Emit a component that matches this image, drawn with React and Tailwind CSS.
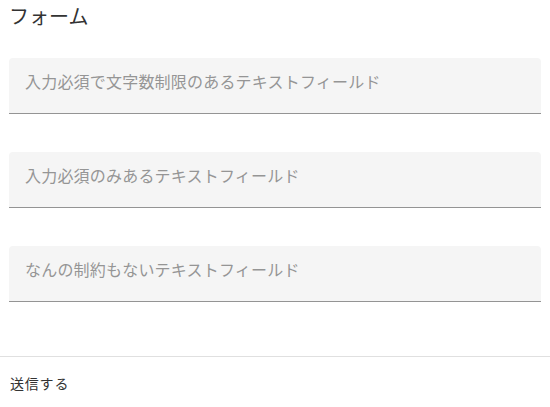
export default function App() {
  const fields = [
    '入力必須で文字数制限のあるテキストフィールド',
    '入力必須のみあるテキストフィールド',
    'なんの制約もないテキストフィールド',
  ];

  return (
    <div
      className="w-[550px] h-[407px] bg-white text-[#212121]"
      style={{ fontFamily: '"Noto Sans CJK JP", "Noto Sans", sans-serif' }}
    >
      {/* Header + fields */}
      <div className="px-[9px]">
        <h1 className="text-[20px] leading-[32px] font-normal text-[#333]">フォーム</h1>
        <div className="mt-[26px] flex flex-col gap-[38px]">
          {fields.map((label) => (
            <div
              key={label}
              className="h-[56px] bg-[#f5f5f5] rounded-t-[4px] border-b border-[#949494] px-[16px] pt-[11px]"
            >
              <span className="text-[16px] leading-[24px] tracking-[0.2px] text-[#959595]">{label}</span>
            </div>
          ))}
        </div>
      </div>

      {/* Actions */}
      <div className="mt-[54px] border-t border-[#e0e0e0] px-[2px] py-[8px]">
        <button className="h-[36px] px-[8px] text-[14px] tracking-[0.8px] text-[#333]">
          送信する
        </button>
      </div>
    </div>
  );
}
